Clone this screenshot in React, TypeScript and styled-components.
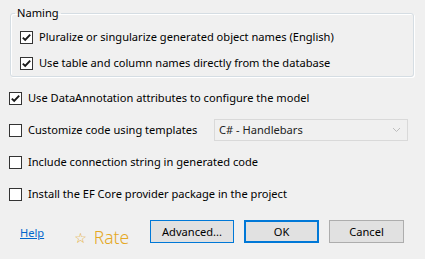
import React from "react";
import styled, { createGlobalStyle } from "styled-components";

const FONT = `"Noto Sans", "Open Sans", sans-serif`;
const SIZE = "11.1px";

const Global = createGlobalStyle`
  html, body { margin: 0; padding: 0; background: #f0f0f0; }
  body { font-family: ${FONT}; font-size: ${SIZE}; color: #000; }
`;

const Page = styled.div`
  width: 425px;
  height: 259px;
  box-sizing: border-box;
  padding-top: 5px;
  display: flex;
  flex-direction: column;
  overflow: hidden;
`;

const Group = styled.fieldset`
  margin: 0 11px 0 10px;
  padding: 3px 0 0 0;
  border: 1px solid #d5dde3;
  border-radius: 3px;
  box-shadow: inset 1px 1px 0 #fff, 1px 1px 0 #fff;
  min-width: 0;
`;

const Legend = styled.legend`
  margin-left: 4px;
  padding: 0 2px;
  line-height: 16px;
  font-size: ${SIZE};
`;

const GroupBody = styled.div`
  padding-left: 9px;
  display: flex;
  flex-direction: column;
`;

const Row = styled.div<{ $h: number }>`
  height: ${(p) => p.$h}px;
  display: flex;
  align-items: center;
  gap: 6px;
  line-height: 16px;
  white-space: nowrap;
`;

const Options = styled.div`
  margin-top: 5px;
  padding: 0 17px 0 9px;
  display: flex;
  flex-direction: column;
`;

const Box = styled.span`
  width: 13px;
  height: 13px;
  box-sizing: border-box;
  border: 1px solid #333;
  background: #fff;
  flex: none;
  display: flex;
  align-items: center;
  justify-content: center;
`;

const Select = styled.div`
  margin-left: auto;
  width: 194px;
  height: 22px;
  box-sizing: border-box;
  border: 1px solid #d9d9d9;
  background: #f0f0f0;
  display: flex;
  align-items: center;
  padding: 0 6px 0 4px;
  color: #222;
`;

const SelectText = styled.span`
  flex: 1;
`;

const Footer = styled.div`
  margin-top: 10px;
  padding: 0 21px 0 20px;
  height: 23px;
  display: flex;
  align-items: center;
`;

const HelpLink = styled.a`
  color: #0066cc;
  text-decoration: underline;
  cursor: pointer;
  margin-top: 2px;
`;

const Rate = styled.span`
  margin-left: 30px;
  color: #e5a823;
  font-size: 17.5px;
  font-weight: 300;
  display: flex;
  align-items: center;
  gap: 7px;
  margin-top: 10px;
  line-height: 20px;
`;

const Star = styled.span`
  font-size: 14px;
  font-weight: 400;
  font-family: "DejaVu Sans", sans-serif;
  margin-top: 2px;
`;

const Buttons = styled.div`
  margin-left: auto;
  display: flex;
  gap: 10px;
`;

const Button = styled.button<{ $w: number; $tone: "focus" | "default" | "plain" }>`
  width: ${(p) => p.$w}px;
  height: 23px;
  box-sizing: border-box;
  border: 1px solid ${(p) => (p.$tone === "plain" ? "#adadad" : "#0078d7")};
  background: #e1e1e1;
  font-family: ${FONT};
  font-size: ${SIZE};
  color: #000;
  padding: 0;
  ${(p) => (p.$tone === "default" ? "box-shadow: inset 0 0 0 1px #0078d7;" : "")}
`;

const Check = ({ on }: { on?: boolean }) => (
  <Box>
    {on && (
      <svg width="11" height="11" viewBox="0 0 11 11">
        <path d="M1.8 5.6 L4.2 8 L9.2 2.6" fill="none" stroke="#1a1a1a" strokeWidth="1.9" />
      </svg>
    )}
  </Box>
);

export default function App() {
  return (
    <>
      <Global />
      <Page>
        <Group>
          <Legend>Naming</Legend>
          <GroupBody>
            <Row $h={26}>
              <Check on />
              <span>Pluralize or singularize generated object names (English)</span>
            </Row>
            <Row $h={26}>
              <Check on />
              <span>Use table and column names directly from the database</span>
            </Row>
          </GroupBody>
        </Group>
        <Options>
          <Row $h={32}>
            <Check on />
            <span>Use DataAnnotation attributes to configure the model</span>
          </Row>
          <Row $h={32}>
            <Check />
            <span>Customize code using templates</span>
            <Select>
              <SelectText>C# - Handlebars</SelectText>
              <svg width="9" height="6" viewBox="0 0 9 6">
                <path d="M1 1 L4.5 4.5 L8 1" fill="none" stroke="#bdbdbd" strokeWidth="1" />
              </svg>
            </Select>
          </Row>
          <Row $h={32}>
            <Check />
            <span>Include connection string in generated code</span>
          </Row>
          <Row $h={32}>
            <Check />
            <span>Install the EF Core provider package in the project</span>
          </Row>
        </Options>
        <Footer>
          <HelpLink>Help</HelpLink>
          <Rate>
            <Star>☆</Star>
            Rate
          </Rate>
          <Buttons>
            <Button $w={84} $tone="focus">Advanced...</Button>
            <Button $w={75} $tone="default">OK</Button>
            <Button $w={75} $tone="plain">Cancel</Button>
          </Buttons>
        </Footer>
      </Page>
    </>
  );
}
